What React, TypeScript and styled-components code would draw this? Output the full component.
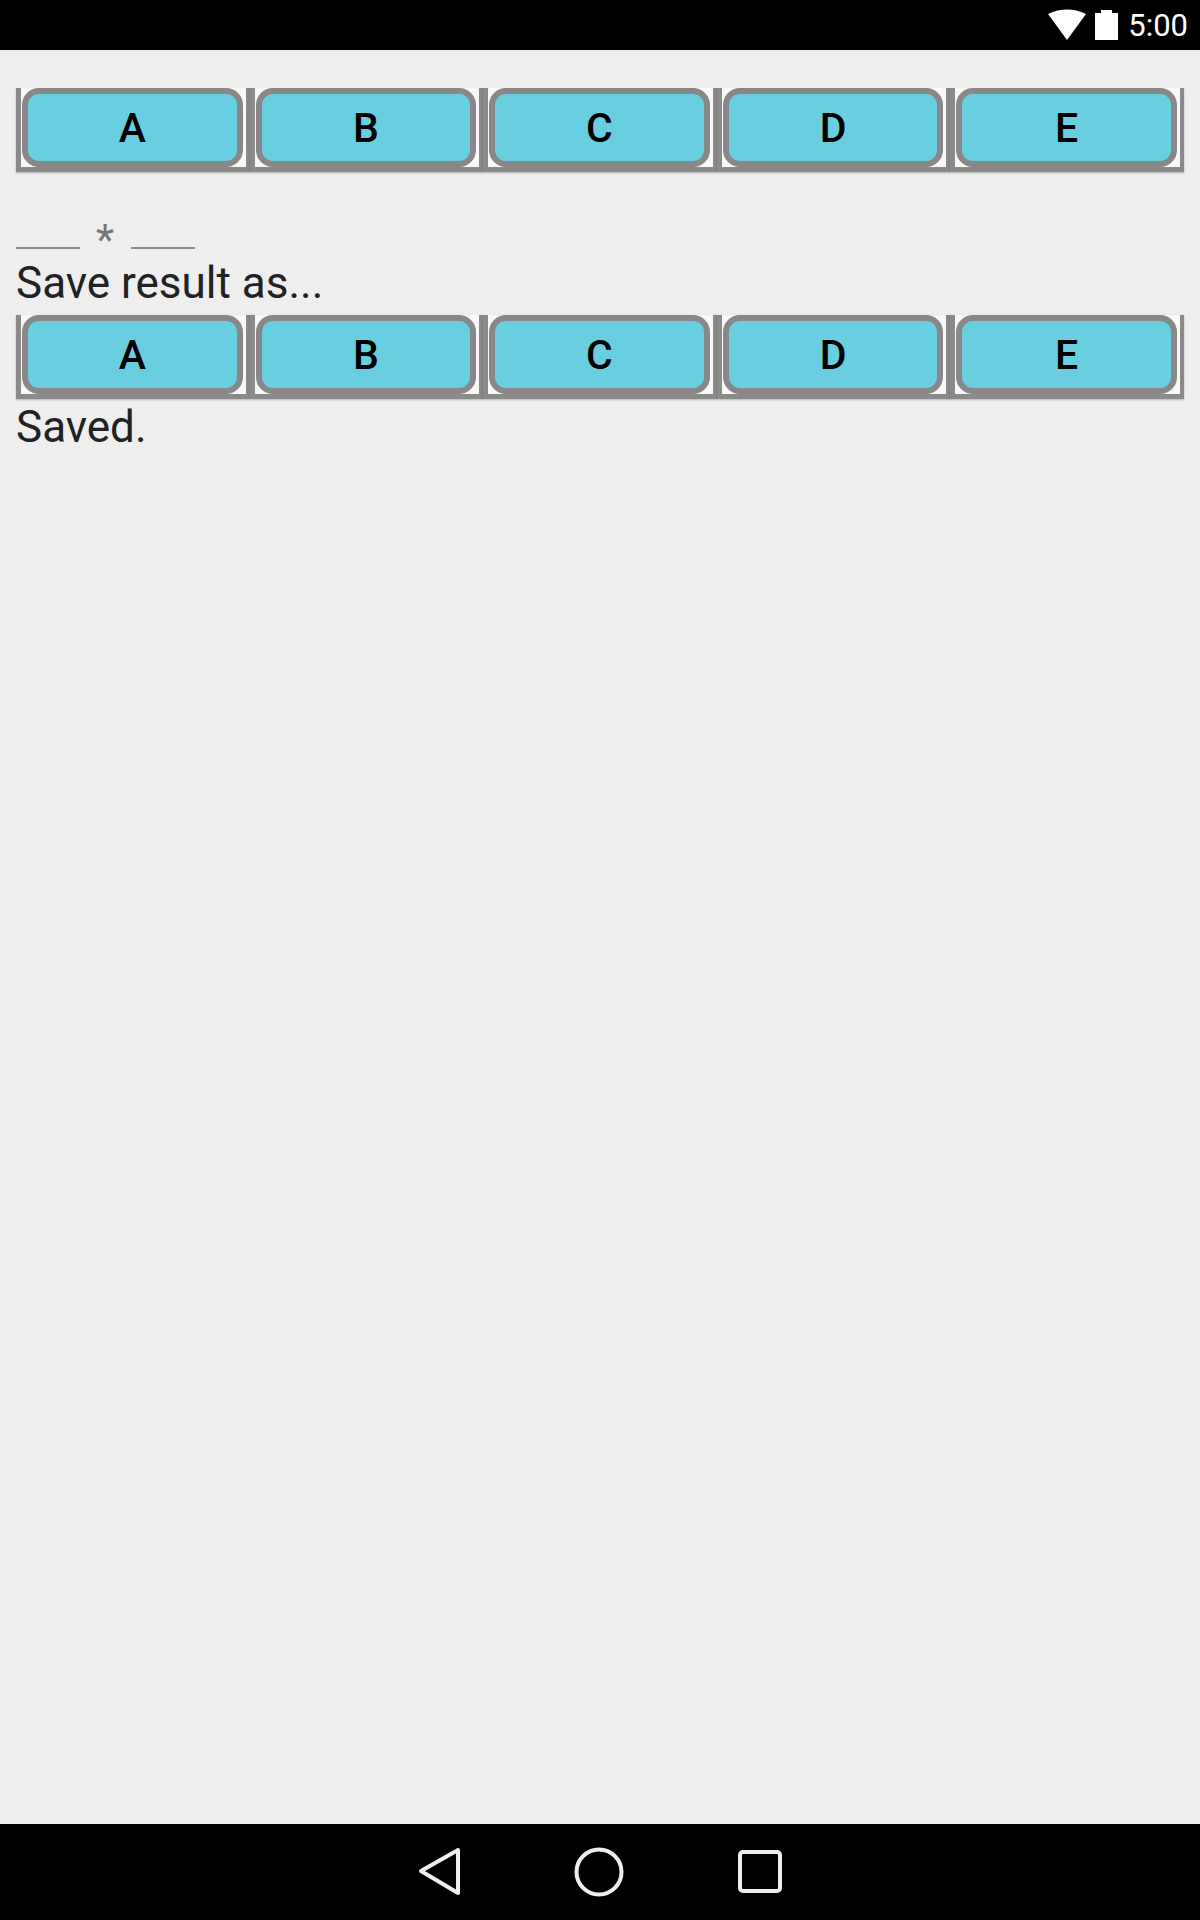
import React from 'react'
import styled, { createGlobalStyle } from 'styled-components'

const GlobalStyle = createGlobalStyle`
  html, body {
    margin: 0;
    padding: 0;
    background: #eeeeee;
    font-family: Roboto, "Noto Sans", "Liberation Sans", sans-serif;
  }
`

const LETTERS = ['A', 'B', 'C', 'D', 'E']

const ButtonRow = ({ first }: { first?: boolean }) => (
  <Row $first={first}>
    {LETTERS.map((l, i) => (
      <Cell key={l} $last={i === LETTERS.length - 1}>
        <LetterBtn>{l}</LetterBtn>
      </Cell>
    ))}
  </Row>
)

const App = () => {
  return (
    <Screen>
      <GlobalStyle />
      <StatusBar>
        <svg width="40" height="32" viewBox="0 0 40 32">
          <path d="M20 31 L1 5 A45 45 0 0 1 39 5 Z" fill="#fff" />
        </svg>
        <svg width="23" height="30" viewBox="0 0 23 30">
          <rect x="6" y="0" width="11" height="4" fill="#fff" />
          <rect x="0" y="3" width="23" height="27" fill="#fff" />
        </svg>
        <Clock>5:00</Clock>
      </StatusBar>

      <Content>
        <ButtonRow first />

        <Formula>
          <Blank type="text" />
          <Star>*</Star>
          <Blank type="text" />
        </Formula>

        <Label>Save result as...</Label>
        <ButtonRow />
        <Label $gap={4}>Saved.</Label>
      </Content>

      <NavBar>
        <svg width="42" height="50" viewBox="0 0 42 50">
          <path d="M40 3 L3 24 L40 46 Z" fill="none" stroke="#eee" strokeWidth="4" strokeLinejoin="round" />
        </svg>
        <svg width="50" height="50" viewBox="0 0 50 50">
          <circle cx="25" cy="25" r="22.5" fill="none" stroke="#eee" strokeWidth="4" />
        </svg>
        <svg width="44" height="44" viewBox="0 0 44 44">
          <rect x="2" y="2" width="40" height="39" rx="3" fill="none" stroke="#eee" strokeWidth="4" />
        </svg>
      </NavBar>
    </Screen>
  )
}

const Screen = styled.div`
  width: 1200px;
  height: 1920px;
  display: flex;
  flex-direction: column;
  background: #eeeeee;
`

const StatusBar = styled.div`
  height: 50px;
  background: #000;
  display: flex;
  align-items: center;
  justify-content: flex-end;
  padding-right: 12px;
  gap: 8px;
  flex-shrink: 0;
`

const Clock = styled.span`
  color: #fff;
  font-size: 31px;
  margin-left: 2px;
  line-height: 1;
`

const Content = styled.div`
  flex: 1;
  padding: 0 16px;
`

const Row = styled.div<{ $first?: boolean }>`
  display: flex;
  width: 1168px;
  margin-top: ${p => (p.$first ? '38px' : '7px')};
`

const Cell = styled.div<{ $last?: boolean }>`
  flex: 1;
  height: 84px;
  box-sizing: border-box;
  display: flex;
  background: #f8f8f8;
  border-left: 5px solid #8a8a8a;
  border-right: 4px solid #8a8a8a;
  border-bottom: 5px solid #8a8a8a;
  padding: 0 3px 0 1px;
  box-shadow: 0 1px 2px rgba(0, 0, 0, 0.25);
`

const LetterBtn = styled.button`
  flex: 1;
  height: 79px;
  box-sizing: border-box;
  margin: 0;
  border: 6px solid #888888;
  border-radius: 17px;
  background: #69cee0;
  color: #000;
  font-family: Roboto, "Liberation Sans", sans-serif;
  font-size: 41px;
  font-weight: 500;
  padding: 0;
  cursor: pointer;
`

const Formula = styled.div`
  display: flex;
  align-items: flex-start;
  height: 87px;
`

const Blank = styled.input`
  width: 64px;
  height: 42px;
  margin-top: 35px;
  box-sizing: border-box;
  border: none;
  border-bottom: 2px solid #8a8a8a;
  background: transparent;
  outline: none;
  padding: 0;
  font-size: 42px;
  font-family: Roboto, sans-serif;
`

const Star = styled.span`
  margin: 53px 17px 0 16px;
  font-size: 42px;
  line-height: 30px;
  color: #777777;
`

const Label = styled.div<{ $gap?: number }>`
  margin-top: ${p => p.$gap || 0}px;
  font-size: 44px;
  line-height: 49px;
  color: #222222;
`

const NavBar = styled.div`
  height: 96px;
  flex-shrink: 0;
  background: #000;
  display: flex;
  align-items: center;
  justify-content: center;
  gap: 114px;
`

export default App
